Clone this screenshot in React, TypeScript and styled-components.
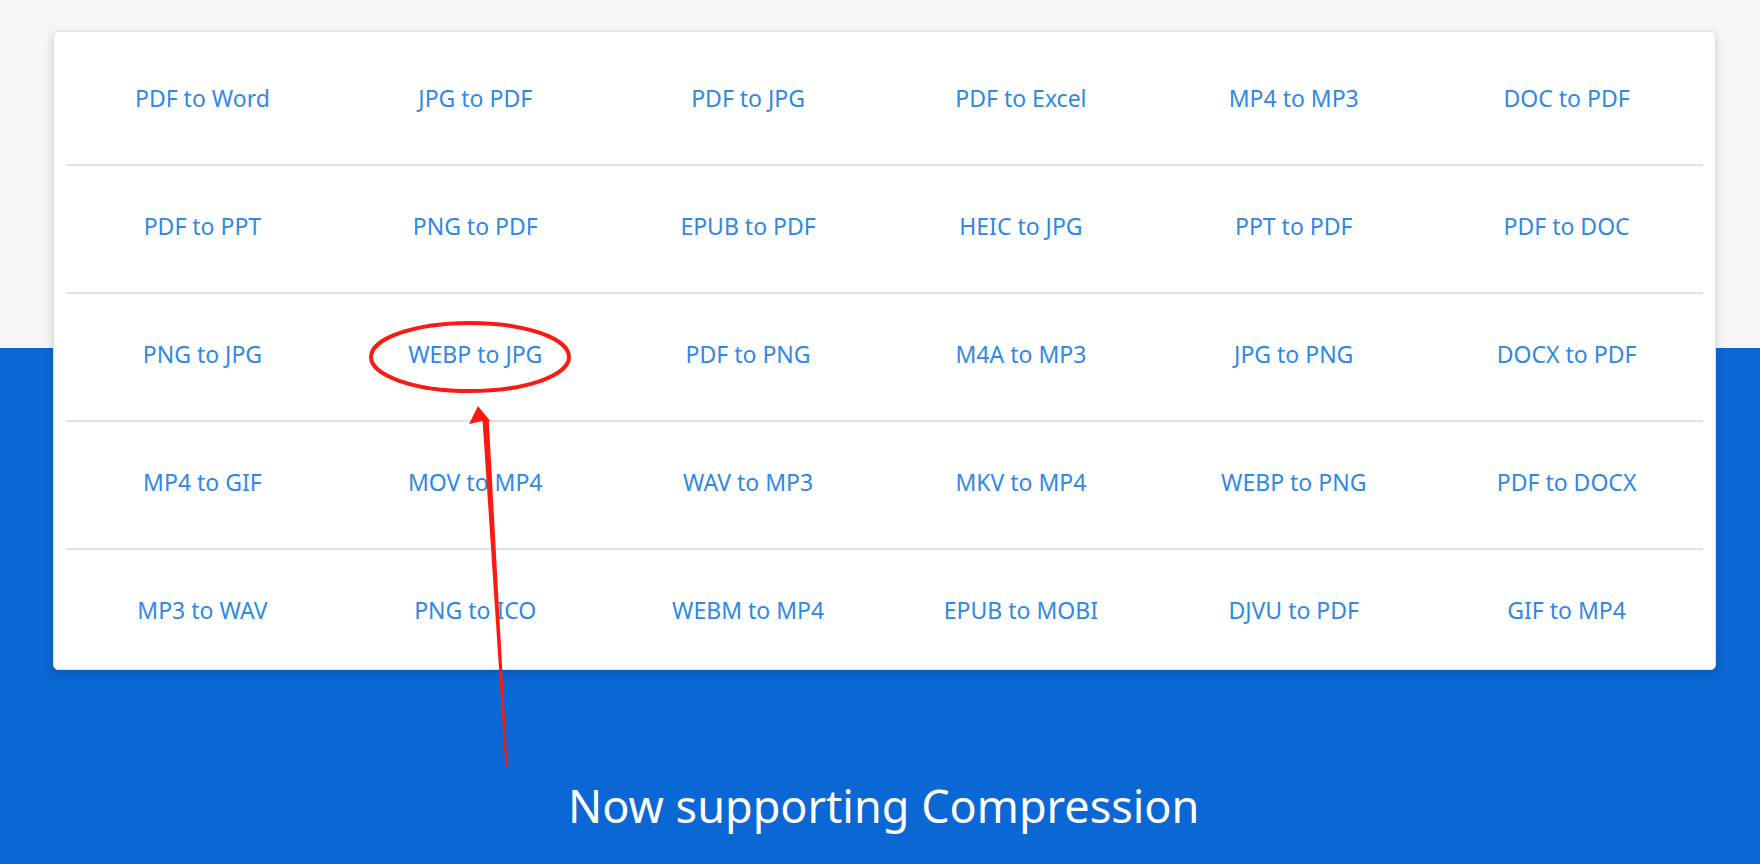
import React from 'react'
import styled, { createGlobalStyle } from 'styled-components'

const GlobalStyle = createGlobalStyle`
  html, body {
    margin: 0;
    padding: 0;
  }
  body {
    font-family: 'Noto Sans', 'Open Sans', sans-serif;
    overflow: hidden;
  }
`

const tools: string[][] = [
  ['PDF to Word', 'JPG to PDF', 'PDF to JPG', 'PDF to Excel', 'MP4 to MP3', 'DOC to PDF'],
  ['PDF to PPT', 'PNG to PDF', 'EPUB to PDF', 'HEIC to JPG', 'PPT to PDF', 'PDF to DOC'],
  ['PNG to JPG', 'WEBP to JPG', 'PDF to PNG', 'M4A to MP3', 'JPG to PNG', 'DOCX to PDF'],
  ['MP4 to GIF', 'MOV to MP4', 'WAV to MP3', 'MKV to MP4', 'WEBP to PNG', 'PDF to DOCX'],
  ['MP3 to WAV', 'PNG to ICO', 'WEBM to MP4', 'EPUB to MOBI', 'DJVU to PDF', 'GIF to MP4'],
]

export default function App() {
  return (
    <Page>
      <GlobalStyle />
      <Card>
        {tools.map((row, i) => (
          <Row key={i} last={i === tools.length - 1}>
            {row.map(t => (
              <Cell key={t}>
                <ToolLink href="#">{t}</ToolLink>
              </Cell>
            ))}
          </Row>
        ))}
      </Card>
      <Banner>Now supporting Compression</Banner>
      {/* red markup drawn over the screenshot */}
      <Annotation viewBox="0 0 1760 864">
        <ellipse cx="470" cy="357" rx="99" ry="34" fill="none" stroke="#fb1a12" strokeWidth="4" />
        <polygon
          points="507.5,767 505.5,767 482.6,421 469,424 478,406 491,422 488.8,421"
          fill="#fb1a12"
        />
      </Annotation>
    </Page>
  )
}

const Page = styled.div`
  position: relative;
  width: 1760px;
  height: 864px;
  overflow: hidden;
  background: linear-gradient(to bottom, #f6f6f6 0, #f6f6f6 348px, #0a67d3 348px, #0a67d3 100%);
  padding-top: 31px;
  box-sizing: border-box;
`

const Card = styled.div`
  margin: 0 44px 0 53px;
  height: 639px;
  box-sizing: border-box;
  background: #fff;
  border: 1px solid #e2e2e2;
  border-radius: 5px;
  box-shadow: 0 3px 10px rgba(0, 0, 0, 0.16);
  padding: 6px 12px 0;
  display: flex;
  flex-direction: column;
`

const Row = styled.div<{ last?: boolean }>`
  display: grid;
  grid-template-columns: repeat(6, 1fr);
  box-sizing: border-box;
  flex: none;
  height: ${p => (p.last ? '119px' : '128px')};
  border-bottom: ${p => (p.last ? 'none' : '2px solid #e0e2e6')};
  padding: ${p => (p.last ? '2px 0 0' : '0 0 6px')};
`

const Cell = styled.div`
  display: flex;
  align-items: center;
  justify-content: center;
`

const ToolLink = styled.a`
  color: #2f87e6;
  text-decoration: none;
  font-size: 23px;
  line-height: 1;
  white-space: nowrap;
`

const Banner = styled.div`
  margin-top: 110px;
  padding-left: 568px;
  color: #fff;
  font-size: 45px;
  line-height: 52px;
  white-space: nowrap;
`

const Annotation = styled.svg`
  position: absolute;
  left: 0;
  top: 0;
  width: 1760px;
  height: 864px;
  pointer-events: none;
`
